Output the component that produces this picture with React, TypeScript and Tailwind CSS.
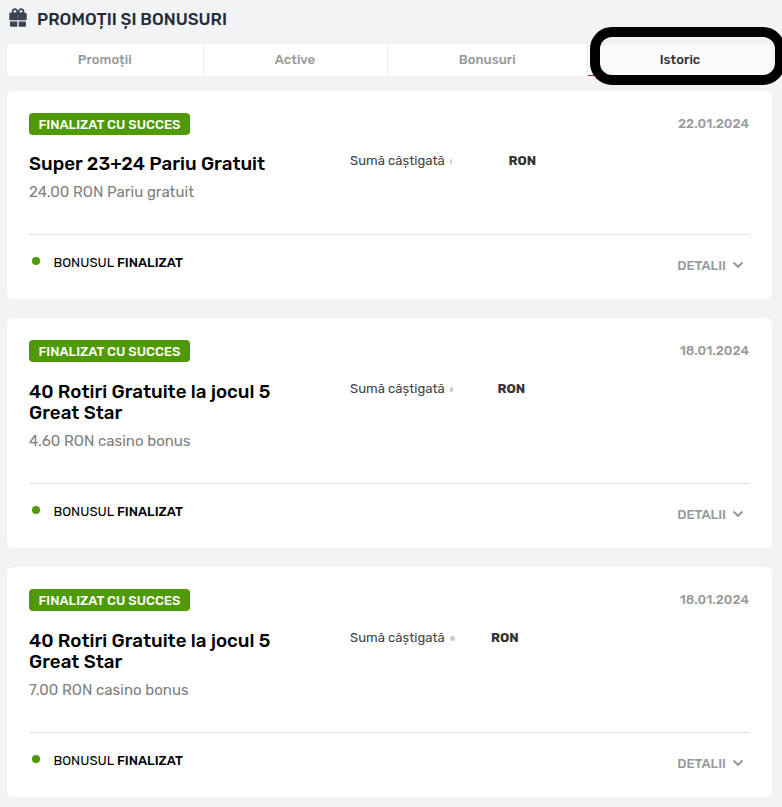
import clsx from 'clsx';

type Bonus = {
  title: string[];
  amount: string;
  date: string;
  // latimea zonei in care suma este ascunsa
  mask: string;
  dot: string;
};

const tabs = [
  { label: 'Promoții', className: 'w-[196.5px] border-r border-[#ececee]' },
  { label: 'Active', className: 'w-[184px] border-r border-[#ececee]' },
  { label: 'Bonusuri', className: 'w-[200.5px] border-r border-[#ececee]' },
];

const bonuses: Bonus[] = [
  {
    title: ['Super 23+24 Pariu Gratuit'],
    amount: '24.00 RON Pariu gratuit',
    date: '22.01.2024',
    mask: 'w-[56.5px]',
    dot: 'w-[2px]',
  },
  {
    title: ['40 Rotiri Gratuite la jocul 5', 'Great Star'],
    amount: '4.60 RON casino bonus',
    date: '18.01.2024',
    mask: 'w-[44.5px]',
    dot: 'w-[3px]',
  },
  {
    title: ['40 Rotiri Gratuite la jocul 5', 'Great Star'],
    amount: '7.00 RON casino bonus',
    date: '18.01.2024',
    mask: 'w-[36px]',
    dot: 'w-[5px]',
  },
];

function GiftIcon() {
  return (
    <svg width="18" height="20" viewBox="0 0 18 20" className="shrink-0">
      <g fill="#3b4552">
        <path d="M1.8 5.6H16Q17.7 5.6 17.7 7.2V12.2Q17.7 13.2 16.7 13.2H1.3Q.3 13.2 .3 12.2V7.2Q.3 5.6 1.8 5.6Z" />
        <path d="M1 14.6H8.3V19.7H2.2Q1 19.7 1 18.5Z" />
        <path d="M9.7 14.6H17V18.5Q17 19.7 15.8 19.7H9.7Z" />
      </g>
      <path d="M9 8V13.2" stroke="#5d6671" strokeWidth="1" />
      <g fill="#f2f3f5" stroke="#3b4552" strokeWidth="1.8">
        <path d="M8.4 6.4H5.2A2.2 2.2 0 1 1 7.5 2.9Q8.4 4.2 8.4 6.4Z" />
        <path d="M9.6 6.4H12.8A2.2 2.2 0 1 0 10.5 2.9Q9.6 4.2 9.6 6.4Z" />
      </g>
    </svg>
  );
}

function BonusCard({ bonus }: { bonus: Bonus }) {
  const single = bonus.title.length === 1;
  return (
    <div className={clsx('flex flex-col rounded-[6px] bg-white pt-[22px] pr-[23px] pl-[22px]', single ? 'h-[208px]' : 'h-[230px]')}>
      <div className="flex items-start justify-between">
        <span className="flex h-[22px] w-[161px] items-center justify-center rounded-[4px] bg-[#4f9a00] pt-px text-[13.1px] font-medium whitespace-nowrap text-white">
          FINALIZAT CU SUCCES
        </span>
        <span className="text-[13.1px] leading-[22px] font-medium text-[#999]">{bonus.date}</span>
      </div>

      <div className={clsx('flex items-start', single ? 'h-[99px] pt-[18px]' : 'h-[121px] pt-[19px]')}>
        <div className="w-[321px] whitespace-nowrap">
          <h2 className="text-[18.78px] leading-[21px] font-medium text-black">
            {bonus.title.map((line) => (
              <span key={line} className="block">{line}</span>
            ))}
          </h2>
          <p className="mt-[8px] text-[15px] leading-[20px] text-[#808080]">{bonus.amount}</p>
        </div>
        <div className="flex h-[16px] items-center text-[13.1px] leading-[16px] text-[#444]">
          <span className="w-[100px] whitespace-nowrap">Sumă câștigată</span>
          <i className={clsx('h-[5px] shrink-0 rounded-full bg-[#ccc]', bonus.dot)} />
          <span className={clsx('shrink-0', bonus.mask)} />
          <b className="font-bold text-[#333]">RON</b>
        </div>
      </div>

      <div className="flex items-start justify-between border-t border-[#e0e0e0]">
        <div className="flex items-start pt-[18px] pl-[3px] text-[13.1px] leading-[20px] text-black">
          <i className="mt-[4px] mr-[13.5px] size-[8px] rounded-full bg-[#4f9a00]" />
          <span>
            BONUSUL <b className="font-medium">FINALIZAT</b>
          </span>
        </div>
        <button className="flex items-center pt-[21px] pr-[5px] text-[13.1px] leading-[20px] font-medium text-[#999]">
          DETALII
          <svg width="12" height="8" viewBox="0 0 12 8" className="mb-[3px] ml-[6px]" fill="none" stroke="#999" strokeWidth="2">
            <path d="M1.5 1.5L6 5.8L10.5 1.5" />
          </svg>
        </button>
      </div>
    </div>
  );
}

export default function App() {
  return (
    <div className="relative h-[807px] w-[782px] overflow-hidden bg-[#f2f3f5] pl-[7px] font-['Rubik','Roboto',sans-serif]">
      <header className="flex h-[44px] items-start pt-[7px] pl-[2px]">
        <GiftIcon />
        <h1 className="ml-[10px] text-[16.9px] leading-[25px] font-medium whitespace-nowrap text-[#252c37]">
          PROMOȚII ȘI BONUSURI
        </h1>
      </header>

      <nav className="flex h-[32px] w-[765px] overflow-hidden rounded-[2px] bg-white text-[13.1px] font-medium text-[#999]">
        {tabs.map((tab) => (
          <button key={tab.label} className={tab.className}>{tab.label}</button>
        ))}
        <button className="grow border-b border-[#c8102e] bg-[#fafafa] text-[#333]">Istoric</button>
      </nav>

      <main className="mt-[15px] flex w-[765px] flex-col gap-[19px]">
        {bonuses.map((bonus, i) => (
          <BonusCard key={i} bonus={bonus} />
        ))}
      </main>

      {/* marcajul desenat peste tab-ul activ */}
      <div className="absolute top-[27px] left-[590px] h-[58px] w-[195px] rounded-[22px] border-[10px] border-black" />
    </div>
  );
}
